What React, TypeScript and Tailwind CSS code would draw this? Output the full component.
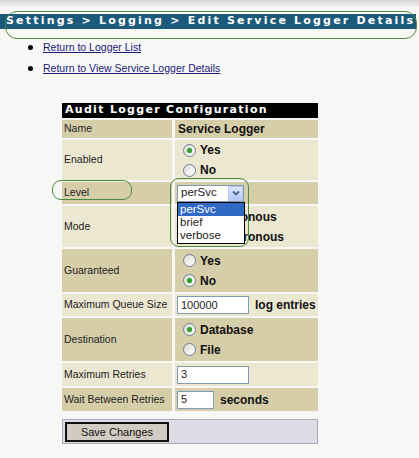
import React from 'react';

const ui = { fontFamily: '"Liberation Sans", Arial, sans-serif' };
const wide = { fontFamily: '"DejaVu Sans", Verdana, sans-serif' };

function Radio({ checked, label }: { checked?: boolean; label: string }) {
    return (
        <div className="flex items-center h-[20px] pl-[6px] gap-[4px]">
            <span className="w-[13px] h-[13px] rounded-full border border-[#6f7f94] bg-gradient-to-br from-[#dcdcd4] to-white flex items-center justify-center">
                {checked && <span className="w-[5px] h-[5px] rounded-full bg-[#2f9f2f] shadow-[0_0_1px_#6fd06f]" />}
            </span>
            <span className="font-bold text-[12px] text-[#111]">{label}</span>
        </div>
    );
}

function Row({ label, dark, h, children }: { label: string; dark?: boolean; h: string; children: React.ReactNode }) {
    const bg = dark ? 'bg-[#d6cea9]' : 'bg-[#ebe7d1]';
    return (
        <div className={`grid grid-cols-[110px_1fr] gap-[3px] ${h}`}>
            <div className={`${bg} flex items-center pl-[2px] text-[10.5px] text-[#222]`}>{label}</div>
            <div className={`${bg} flex flex-col justify-center px-[2px]`}>{children}</div>
        </div>
    );
}

function TextBox({ value, w }: { value: string; w: string }) {
    return (
        <div className={`${w} h-[18px] bg-white border border-[#7f9db9] text-[11px] pl-[3px] flex items-center`}>{value}</div>
    );
}

export default function App() {
    return (
        <div className="relative w-[419px] h-[458px] overflow-hidden bg-[#f7f7f5] text-[#222]" style={ui}>
            {/* browser chrome strip */}
            <div className="h-[7px] bg-gradient-to-b from-[#d8d8d8] to-[#efefef]" />

            {/* page title */}
            <div className="mt-[7px] w-[416px] h-[15px] bg-[#1b5a7a] flex items-center pl-[6px]">
                <span className="text-white font-bold text-[11px] tracking-[2.2px] whitespace-nowrap" style={wide}>
                    Settings &gt; Logging &gt; Edit Service Logger Details
                </span>
            </div>

            {/* links */}
            <ul className="mt-[12px] flex flex-col gap-[8px] pl-[28px] text-[10.5px]">
                <li className="flex items-center gap-[10px] h-[13px]">
                    <span className="w-[5px] h-[5px] rounded-full bg-black" />
                    <a className="text-[#1a1a78] underline">Return to Logger List</a>
                </li>
                <li className="flex items-center gap-[10px] h-[13px]">
                    <span className="w-[5px] h-[5px] rounded-full bg-black" />
                    <a className="text-[#1a1a78] underline">Return to View Service Logger Details</a>
                </li>
            </ul>

            {/* configuration table */}
            <div className="ml-[62px] mt-[28px] w-[256px] flex flex-col gap-[2px]">
                <div className="h-[15px] bg-black flex items-center pl-[3px]">
                    <span className="text-white font-bold text-[11px] tracking-[1.3px]" style={wide}>Audit Logger Configuration</span>
                </div>
                <Row label="Name" dark h="h-[18px]">
                    <span className="font-bold text-[12px] text-[#111] pl-[1px]">Service Logger</span>
                </Row>
                <Row label="Enabled" h="h-[40px]">
                    <Radio checked label="Yes" />
                    <Radio label="No" />
                </Row>
                <Row label="Level" dark h="h-[22px]">
                    <div className="w-[67px] h-[17px] bg-white border border-[#7f9db9] flex items-center justify-between">
                        <span className="text-[11.5px] pl-[3px]">perSvc</span>
                        <span className="w-[15px] h-[15px] bg-gradient-to-b from-[#dbe6fd] to-[#b4c8f6] border border-[#b7c9f3] flex items-center justify-center">
                            <svg width="8" height="6" viewBox="0 0 8 6">
                                <path d="M1 1.5 L4 4.5 L7 1.5" stroke="#4d6185" strokeWidth="1.8" fill="none" />
                            </svg>
                        </span>
                    </div>
                </Row>
                <Row label="Mode" h="h-[41px]">
                    <Radio checked label="Synchronous" />
                    <Radio label="Asynchronous" />
                </Row>
                <Row label="Guaranteed" dark h="h-[43px]">
                    <Radio label="Yes" />
                    <Radio checked label="No" />
                </Row>
                <Row label="Maximum Queue Size" h="h-[22px]">
                    <div className="flex items-center gap-[6px]">
                        <TextBox value="100000" w="w-[72px]" />
                        <span className="font-bold text-[12px] text-[#111]">log entries</span>
                    </div>
                </Row>
                <Row label="Destination" dark h="h-[43px]">
                    <Radio checked label="Database" />
                    <Radio label="File" />
                </Row>
                <Row label="Maximum Retries" h="h-[23px]">
                    <TextBox value="3" w="w-[72px]" />
                </Row>
                <Row label="Wait Between Retries" dark h="h-[23px]">
                    <div className="flex items-center gap-[6px]">
                        <TextBox value="5" w="w-[37px]" />
                        <span className="font-bold text-[12px] text-[#111]">seconds</span>
                    </div>
                </Row>

                <div className="mt-[6px] h-[25px] bg-[#dcdce4] border border-[#a9abbc] flex items-center pl-[2px]">
                    <button className="w-[104px] h-[20px] bg-[#d0ccc4] border-2 border-[#111] text-[11px] text-[#111]">
                        Save Changes
                    </button>
                </div>
            </div>

            {/* open level dropdown */}
            <div className="absolute left-[177px] top-[202px] w-[68px] bg-white border border-black text-[11.5px] leading-[13px]">
                <div className="bg-[#316ac5] text-white pl-[2px]">perSvc</div>
                <div className="pl-[2px]">brief</div>
                <div className="pl-[2px] pb-[1px]">verbose</div>
            </div>

            {/* green highlight marks */}
            <div className="absolute left-[5px] top-[11px] w-[412px] h-[28px] rounded-[12px] border-[1.5px] border-[#4a8a3c]" />
            <div className="absolute left-[52px] top-[180px] w-[80px] h-[20px] rounded-[9px] border-[1.5px] border-[#4a8a3c]" />
            <div className="absolute left-[170px] top-[178px] w-[79px] h-[69px] rounded-[9px] border-[1.5px] border-[#4a8a3c]" />
        </div>
    );
}
